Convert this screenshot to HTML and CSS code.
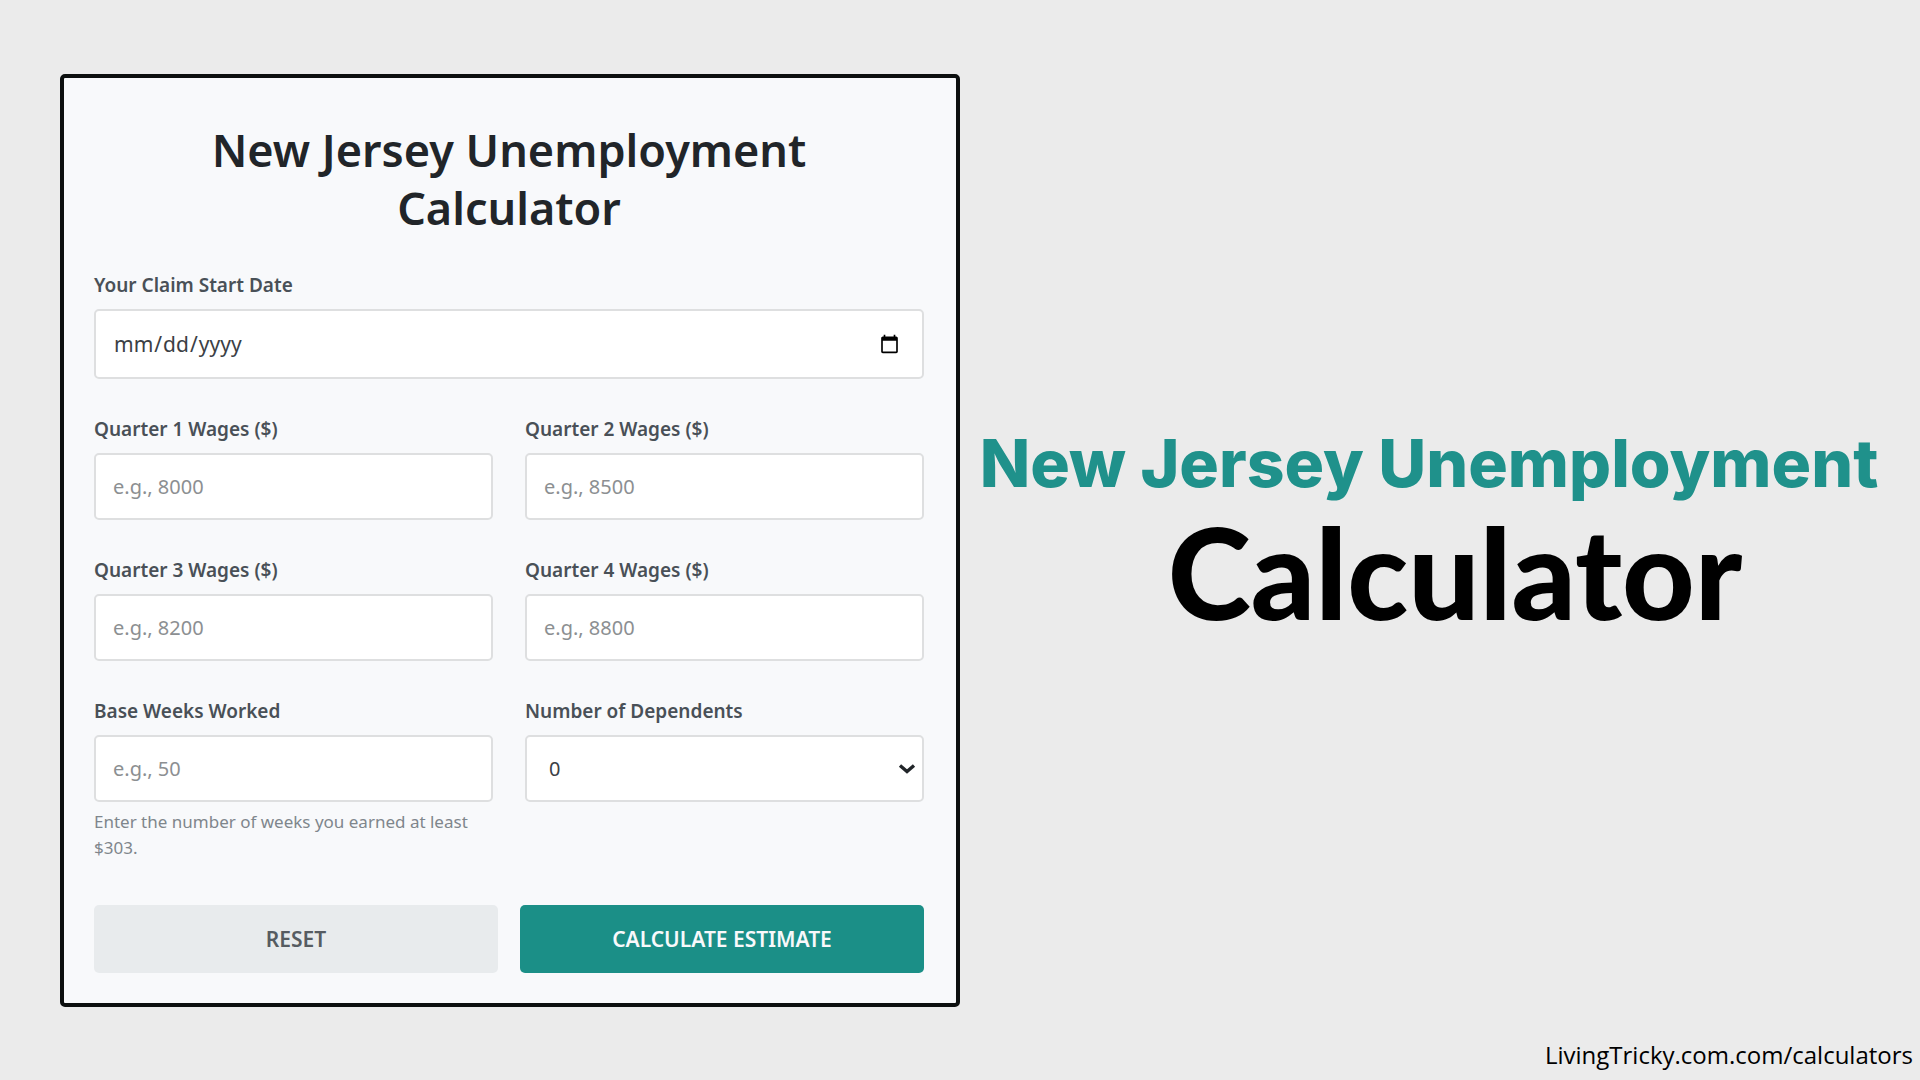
FILE: index.html
```html
<!DOCTYPE html>
<html lang="en-US">

<head>
  <meta charset="UTF-8" />
  <meta name="viewport" content="width=device-width, initial-scale=1.0" />
  <title>New Jersey Unemployment Calculator</title>
  <link rel="stylesheet" href="styles.css">
</head>

<body>
  <main class="page">
    <section class="card">
      <h1>New Jersey Unemployment Calculator</h1>

      <form class="calc-form">
        <div class="field full">
          <label for="claimDate">Your Claim Start Date</label>
          <input type="date" id="claimDate">
        </div>
        <div class="field">
          <label for="q1">Quarter 1 Wages ($)</label>
          <input type="text" id="q1" placeholder="e.g., 8000">
        </div>
        <div class="field">
          <label for="q2">Quarter 2 Wages ($)</label>
          <input type="text" id="q2" placeholder="e.g., 8500">
        </div>
        <div class="field">
          <label for="q3">Quarter 3 Wages ($)</label>
          <input type="text" id="q3" placeholder="e.g., 8200">
        </div>
        <div class="field">
          <label for="q4">Quarter 4 Wages ($)</label>
          <input type="text" id="q4" placeholder="e.g., 8800">
        </div>
        <div class="field">
          <label for="weeks">Base Weeks Worked</label>
          <input type="text" id="weeks" placeholder="e.g., 50">
          <small>Enter the number of weeks you earned at least $303.</small>
        </div>
        <div class="field">
          <label for="dependents">Number of Dependents</label>
          <div class="select-wrap">
            <select id="dependents">
              <option>0</option>
              <option>1</option>
              <option>2</option>
              <option>3</option>
            </select>
            <svg class="chevron" viewBox="0 0 18 12" aria-hidden="true">
              <path d="M2 2.5 9 8.5 16 2.5" fill="none" stroke="#212529" stroke-width="3.4" />
            </svg>
          </div>
        </div>
        <div class="buttons full">
          <button type="reset" class="btn-reset">RESET</button>
          <button type="button" class="btn-calc">CALCULATE ESTIMATE</button>
        </div>
      </form>
    </section>

    <section class="headline">
      <h2>New Jersey Unemployment</h2>
      <p>Calculator</p>
    </section>
  </main>

  <footer>
    <a href="#">LivingTricky.com.com/calculators</a>
  </footer>
</body>

</html>
```
FILE: styles.css
```css
/* Base */
* {
  box-sizing: border-box;
}

body {
  margin: 0;
  min-height: 100vh;
  display: flex;
  flex-direction: column;
  background-color: #ebebeb;
  font-family: 'Noto Sans', sans-serif;
}

.page {
  flex: 1;
  display: grid;
  grid-template-columns: 15fr 16fr;
  align-items: start;
  padding: 74px 0 0 60px;
}

/* Calculator card */
.card {
  background-color: #f8f9fb;
  border: 4px solid #0c0f0f;
  border-radius: 5px;
  padding: 43px 32px 30px 30px;
}

.card h1 {
  margin: 0 0 32px;
  padding: 0 80px;
  color: #212529;
  font-size: 45px;
  font-weight: 600;
  line-height: 58px;
  text-align: center;
}

.calc-form {
  display: grid;
  grid-template-columns: 1fr 1fr;
  gap: 34px 32px;
}

.full {
  grid-column: 1 / -1;
}

.field label {
  display: block;
  margin-bottom: 8px;
  color: #495057;
  font-size: 19px;
  font-weight: 600;
  line-height: 32px;
}

.field input,
.field select {
  display: block;
  width: 100%;
  height: 67px;
  padding: 0 17px;
  background-color: #fff;
  border: 2px solid #dedfe0;
  border-radius: 5px;
  color: #3b4045;
  font-family: inherit;
  font-size: 20px;
}

.field input[type="date"] {
  height: 70px;
  padding-right: 20px;
  font-size: 21px;
}

.field input::placeholder {
  color: #8c8f92;
}

.field small {
  display: block;
  margin-top: 7px;
  color: #7f868c;
  font-size: 17px;
  line-height: 26px;
}

/* Dropdown arrow */
.select-wrap {
  position: relative;
}

.field select {
  appearance: none;
  padding-left: 22px;
}

.chevron {
  position: absolute;
  right: 8px;
  top: 28px;
  width: 18px;
  height: 12px;
  pointer-events: none;
}

/* Buttons */
.buttons {
  display: grid;
  grid-template-columns: 1fr 1fr;
  gap: 22px;
  margin-top: 10px;
}

.buttons button {
  height: 68px;
  border: none;
  border-radius: 5px;
  font-family: inherit;
  font-size: 21px;
  font-weight: 600;
}

.btn-reset {
  background-color: #e8ebed;
  color: #565c62;
}

.btn-calc {
  background-color: #1b8f87;
  color: #f8f9fb;
}

/* Headline */
.headline {
  align-self: center;
  padding: 0 22px 18px 0;
  text-align: center;
}

.headline h2 {
  margin: 0;
  color: #1f918b;
  font-family: Inter, sans-serif;
  font-size: 66px;
  font-weight: 800;
  line-height: 80px;
  white-space: nowrap;
}

.headline p {
  margin: 0;
  padding-left: 52px;
  color: #000;
  font-family: Lato, sans-serif;
  font-size: 126px;
  font-weight: 900;
  line-height: 138px;
}

/* Footer */
footer {
  height: 74px;
  padding: 32px 7px 0 0;
  text-align: right;
}

footer a {
  color: #000;
  font-family: 'Open Sans', sans-serif;
  font-size: 24px;
  line-height: 32px;
  text-decoration: none;
}
```
